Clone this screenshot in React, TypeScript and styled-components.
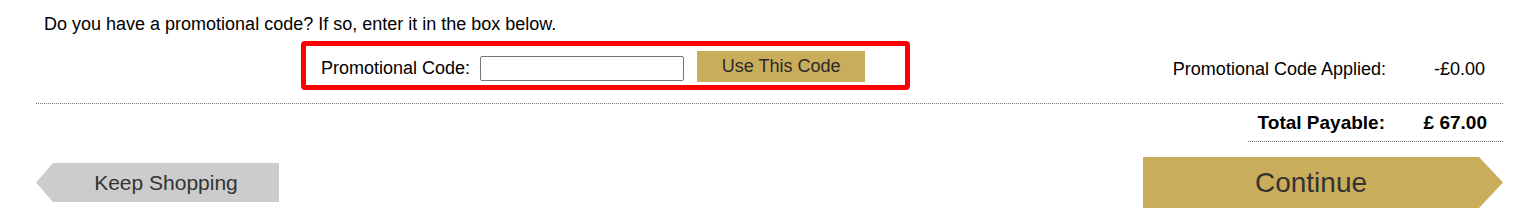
import React from 'react';
import styled, {createGlobalStyle} from 'styled-components';

const GlobalStyle = createGlobalStyle`
	body{
		margin:0;
		background:#fff;
		font-family:"Liberation Sans", Arial, sans-serif;
		color:#000;
	}
`;

const Page = styled.div`
	padding:15px 30px 0 36px;
`;

const Intro = styled.p`
	margin:0 0 8px 8px;
	font-size:18px;
	line-height:18px;
`;

const TopRow = styled.div`
	display:flex;
	justify-content:space-between;
	align-items:center;
	padding-bottom:13px;
	border-bottom:1px dotted #777;
`;

const PromoBox = styled.form`
	display:flex;
	align-items:flex-end;
	margin-left:265px;
	padding:5px 40px 3px 15px;
	border:5px solid #ff0000;
	border-radius:4px;
`;

const PromoLabel = styled.label`
	font-size:18px;
	line-height:20px;
	margin:0 10px 4px 0;
`;

const PromoInput = styled.input`
	box-sizing:border-box;
	width:204px;
	height:25px;
	margin:0 13px 1px 0;
	border:1px solid #767676;
	border-radius:2px;
`;

const GoldButton = styled.button`
	width:168px;
	height:31px;
	border:none;
	background:#c9ad5b;
	color:#2a2a2a;
	font-family:inherit;
	font-size:18px;
`;

const Summary = styled.div<{$bold?: boolean}>`
	display:grid;
	grid-template-columns:auto ${p => p.$bold ? '102px' : '99px'};
	justify-items:end;
	padding:${p => p.$bold ? '9px 16px 8px 0' : '6px 18px 0 0'};
	font-size:${p => p.$bold ? '19px' : '18px'};
	font-weight:${p => p.$bold ? 'bold' : 'normal'};
	line-height:20px;
`;

const TotalWrap = styled.div`
	display:flex;
	justify-content:flex-end;
	> div{
		width:255px;
		box-sizing:border-box;
		border-bottom:1px dotted #777;
		justify-content:end;
	}
`;

const Actions = styled.div`
	display:flex;
	justify-content:space-between;
	align-items:center;
	margin-top:15px;
`;

const ArrowButton = styled.button<{$dir: 'left' | 'right'}>`
	border:none;
	font-family:inherit;
	color:#333;
	cursor:pointer;
	${p => p.$dir === 'left' ? `
		width:243px;
		height:39px;
		padding:0 0 0 17px;
		background:#cccccc;
		font-size:21px;
		clip-path:polygon(17px 0, 100% 0, 100% 100%, 17px 100%, 0 50%);
	` : `
		width:360px;
		height:51px;
		padding:0 24px 0 0;
		background:#c9ad5b;
		font-size:28px;
		clip-path:polygon(0 0, calc(100% - 24px) 0, 100% 50%, calc(100% - 24px) 100%, 0 100%);
	`}
`;

export default function App() {
	return (
		<Page>
			<GlobalStyle/>
			<Intro>Do you have a promotional code? If so, enter it in the box below.</Intro>
			<TopRow>
				<PromoBox onSubmit={e => e.preventDefault()}>
					<PromoLabel htmlFor="promo">Promotional Code:</PromoLabel>
					<PromoInput id="promo" type="text"/>
					<GoldButton type="submit">Use This Code</GoldButton>
				</PromoBox>
				<Summary>
					<span>Promotional Code Applied:</span>
					<span>-£0.00</span>
				</Summary>
			</TopRow>
			<TotalWrap>
				<Summary $bold>
					<span>Total Payable:</span>
					<span>£ 67.00</span>
				</Summary>
			</TotalWrap>
			<Actions>
				<ArrowButton $dir="left">Keep Shopping</ArrowButton>
				<ArrowButton $dir="right">Continue</ArrowButton>
			</Actions>
		</Page>
	);
}
